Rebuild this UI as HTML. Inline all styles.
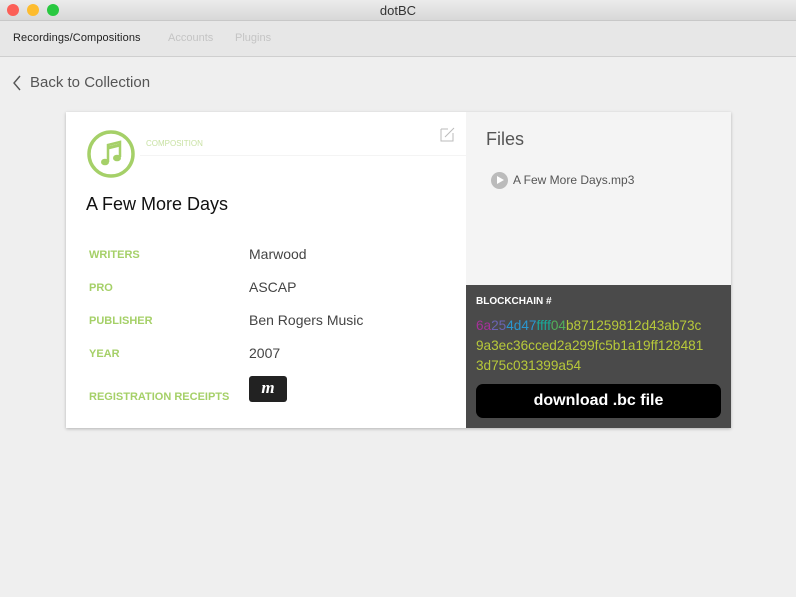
<!DOCTYPE html>
<html><head><style>
*{margin:0;padding:0;box-sizing:border-box}
body{width:796px;height:597px;background:#efefef;font-family:"Liberation Sans",sans-serif;position:relative;overflow:hidden}
.a{position:absolute}
</style></head><body>
<div class="a" style="left:0;top:0;width:796px;height:21px;background:linear-gradient(#ececec,#d8d8d8);border-bottom:1px solid #c8c8c8"></div>
<div class="a" style="left:7px;top:4px;width:12px;height:12px;border-radius:50%;background:#fc5f57"></div>
<div class="a" style="left:27px;top:4px;width:12px;height:12px;border-radius:50%;background:#fdbc2e"></div>
<div class="a" style="left:47px;top:4px;width:12px;height:12px;border-radius:50%;background:#29c840"></div>
<div class="a" style="left:0;top:3px;width:796px;text-align:center;font-size:13px;color:#333">dotBC</div>
<div class="a" style="left:0;top:21px;width:796px;height:36px;background:#e7e7e7;border-bottom:1px solid #cfcfcf"></div>
<div class="a" style="left:13px;top:32px;font-size:11px;color:#222;letter-spacing:0.1px">Recordings/Compositions</div>
<div class="a" style="left:168px;top:32px;font-size:11px;color:#c4c4c4">Accounts</div>
<div class="a" style="left:235px;top:32px;font-size:11px;color:#c4c4c4">Plugins</div>
<svg class="a" style="left:11px;top:74px" width="12" height="18"><path d="M9 2L3 9l6 7" stroke="#555" stroke-width="1.4" fill="none"/></svg>
<div class="a" style="left:30px;top:74px;font-size:15px;color:#555">Back to Collection</div>
<div class="a" style="left:66px;top:112px;width:665px;height:316px;background:#fff;box-shadow:0 1px 3px rgba(0,0,0,.25)"></div>
<div class="a" style="left:466px;top:112px;width:265px;height:173px;background:#f4f4f4"></div>
<div class="a" style="left:466px;top:285px;width:265px;height:143px;background:#4a4a4a"></div>
<svg class="a" style="left:86px;top:129px" width="50" height="50"><circle cx="25" cy="25" r="22" stroke="#a5d068" stroke-width="3.5" fill="none"/><path d="M22 33V16l12-3v15" stroke="#a5d068" stroke-width="2.5" fill="none"/><ellipse cx="19" cy="33" rx="4" ry="3.3" fill="#a5d068"/><ellipse cx="31" cy="29" rx="4" ry="3.3" fill="#a5d068"/><path d="M22 19l12-3" stroke="#a5d068" stroke-width="3"/></svg>
<div class="a" style="left:146px;top:139px;font-size:8px;color:#c9e2a4">COMPOSITION</div>
<div class="a" style="left:140px;top:155px;width:326px;height:1px;background:#f4f4f4"></div>
<svg class="a" style="left:440px;top:126px" width="16" height="16"><path d="M1 3v12h12V7M1 3h7M5 11l9-9" stroke="#bbb" stroke-width="1" fill="none"/></svg>
<div class="a" style="left:86px;top:194px;font-size:18px;color:#111">A Few More Days</div>
<div class="a" style="left:89px;top:249px;font-size:11px;font-weight:bold;color:#a5d068">WRITERS</div>
<div class="a" style="left:89px;top:282px;font-size:11px;font-weight:bold;color:#a5d068">PRO</div>
<div class="a" style="left:89px;top:315px;font-size:11px;font-weight:bold;color:#a5d068">PUBLISHER</div>
<div class="a" style="left:89px;top:348px;font-size:11px;font-weight:bold;color:#a5d068">YEAR</div>
<div class="a" style="left:89px;top:391px;font-size:11px;font-weight:bold;color:#a5d068">REGISTRATION RECEIPTS</div>
<div class="a" style="left:249px;top:246px;font-size:14px;color:#444">Marwood</div>
<div class="a" style="left:249px;top:279px;font-size:14px;color:#444">ASCAP</div>
<div class="a" style="left:249px;top:312px;font-size:14px;color:#444">Ben Rogers Music</div>
<div class="a" style="left:249px;top:345px;font-size:14px;color:#444">2007</div>
<div class="a" style="left:249px;top:376px;width:38px;height:26px;background:#222;border-radius:3px;color:#fff;font:italic bold 17px 'Liberation Serif',serif;text-align:center;line-height:24px">m</div>
<div class="a" style="left:486px;top:129px;font-size:18px;color:#555">Files</div>
<div class="a" style="left:491px;top:172px;width:17px;height:17px;border-radius:50%;background:#bbb"></div>
<div class="a" style="left:497px;top:176px;width:0;height:0;border-left:7px solid #fff;border-top:4.5px solid transparent;border-bottom:4.5px solid transparent"></div>
<div class="a" style="left:513px;top:173px;font-size:12px;color:#555">A Few More Days.mp3</div>
<div class="a" style="left:476px;top:296px;font-size:10px;font-weight:bold;color:#fff">BLOCKCHAIN #</div>
<div class="a" style="left:476px;top:316px;font-size:13.6px;line-height:20px;color:#b7c93a;white-space:nowrap"><span style="color:#a6319a">6a</span><span style="color:#6a64b3">25</span><span style="color:#2a97d0">4d47</span><span style="color:#1aa99a">ffff</span><span style="color:#52b05a">04</span>b871259812d43ab73c<br>9a3ec36cced2a299fc5b1a19ff128481<br>3d75c031399a54</div>
<div class="a" style="left:476px;top:384px;width:245px;height:34px;background:#000;border-radius:7px;color:#fff;font-size:16px;font-weight:bold;text-align:center;line-height:34px">download .bc file</div>
</body></html>
